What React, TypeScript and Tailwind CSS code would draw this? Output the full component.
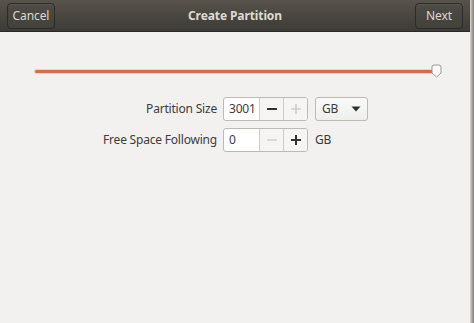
import React from 'react';

const font = { fontFamily: '"Noto Sans", "Open Sans", sans-serif' };

const HeaderButton = ({ label }: { label: string }) => (
  <button className="w-[48px] h-[26px] rounded-[4px] border border-[#2c2b28] bg-gradient-to-b from-[#4e4b45] to-[#43413c] text-[12px] tracking-[-0.1px] text-[#dcd8d0] shadow-[inset_0_1px_0_rgba(255,255,255,0.06)]">
    {label}
  </button>
);

const Sign = ({ plus, on }: { plus?: boolean; on: boolean }) => (
  <div className="w-[24px] flex items-center justify-center border-l border-[#cfcbc5] bg-[#f6f5f4]">
    <svg width="10" height="10" viewBox="0 0 10 10">
      <path d="M0 5 H10" stroke={on ? '#333' : '#c0beba'} strokeWidth={on ? 2 : 1.2} />
      {plus && <path d="M5 0 V10" stroke={on ? '#333' : '#c0beba'} strokeWidth={on ? 2 : 1.2} />}
    </svg>
  </div>
);

const SpinButton = ({ value, minusOn, plusOn }: { value: string; minusOn: boolean; plusOn: boolean }) => (
  <div className="w-fit flex h-[24px] rounded-[3px] border border-[#bdb9b3] bg-white overflow-hidden">
    <div className="w-[35px] flex items-center pl-[5px] text-[12px] text-[#3c3c3c]">{value}</div>
    <Sign on={minusOn} />
    <Sign plus on={plusOn} />
  </div>
);

export default function App() {
  return (
    <div className="w-[474px] h-[323px] flex bg-[#f2f1ef]" style={font}>
      <div className="w-[470px] h-full flex flex-col">
        {/* header bar */}
        <div className="h-[32px] flex items-center justify-between px-[7px] bg-gradient-to-b from-[#57534b] to-[#3d3b37] border-b border-[#2a2926]">
          <HeaderButton label="Cancel" />
          <span className="text-[12px] tracking-[-0.1px] font-bold text-[#dfdbd2]">Create Partition</span>
          <HeaderButton label="Next" />
        </div>

        {/* body */}
        <div className="flex-1 bg-[#f2f1ef] pt-[32px]">
          <div className="relative h-[14px] ml-[35px] mr-[33px] flex items-center">
            <div className="w-full h-[3px] rounded-full bg-[#d26e4c] shadow-[0_0_0_1px_rgba(240,160,130,0.4)]" />
            <svg className="absolute right-[-5px] top-[0px]" width="11" height="14" viewBox="0 0 11 14">
              <path d="M1 3 Q1 1 3 1 H8 Q10 1 10 3 V9 L5.5 13 L1 9 Z" fill="#fbfbfa" stroke="#9a9792" strokeWidth="1" />
            </svg>
          </div>

          <div className="mt-[19px] grid grid-cols-[217px_auto_1fr] gap-x-[6px] gap-y-[7px] items-center text-[12px] tracking-[-0.2px] text-[#3c3c3c]">
            <span className="text-right">Partition Size</span>
            <SpinButton value="3001" minusOn plusOn={false} />
            <div className="ml-[1px] w-[53px] h-[24px] rounded-[3px] border border-[#bdb9b3] bg-gradient-to-b from-[#fafaf9] to-[#efeeec] flex items-center justify-between px-[6px]">
              <span>GB</span>
              <svg width="10" height="6" viewBox="0 0 10 6">
                <path d="M0.5 0.5 H9.5 L5 5.5 Z" fill="#2f2f2f" />
              </svg>
            </div>
            <span className="text-right">Free Space Following</span>
            <SpinButton value="0" minusOn={false} plusOn />
            <span className="ml-[1px]">GB</span>
          </div>
        </div>
      </div>
      <div className="w-[4px] h-full bg-gradient-to-r from-[#d9d7d3] to-[#7e7771]" />
    </div>
  );
}
